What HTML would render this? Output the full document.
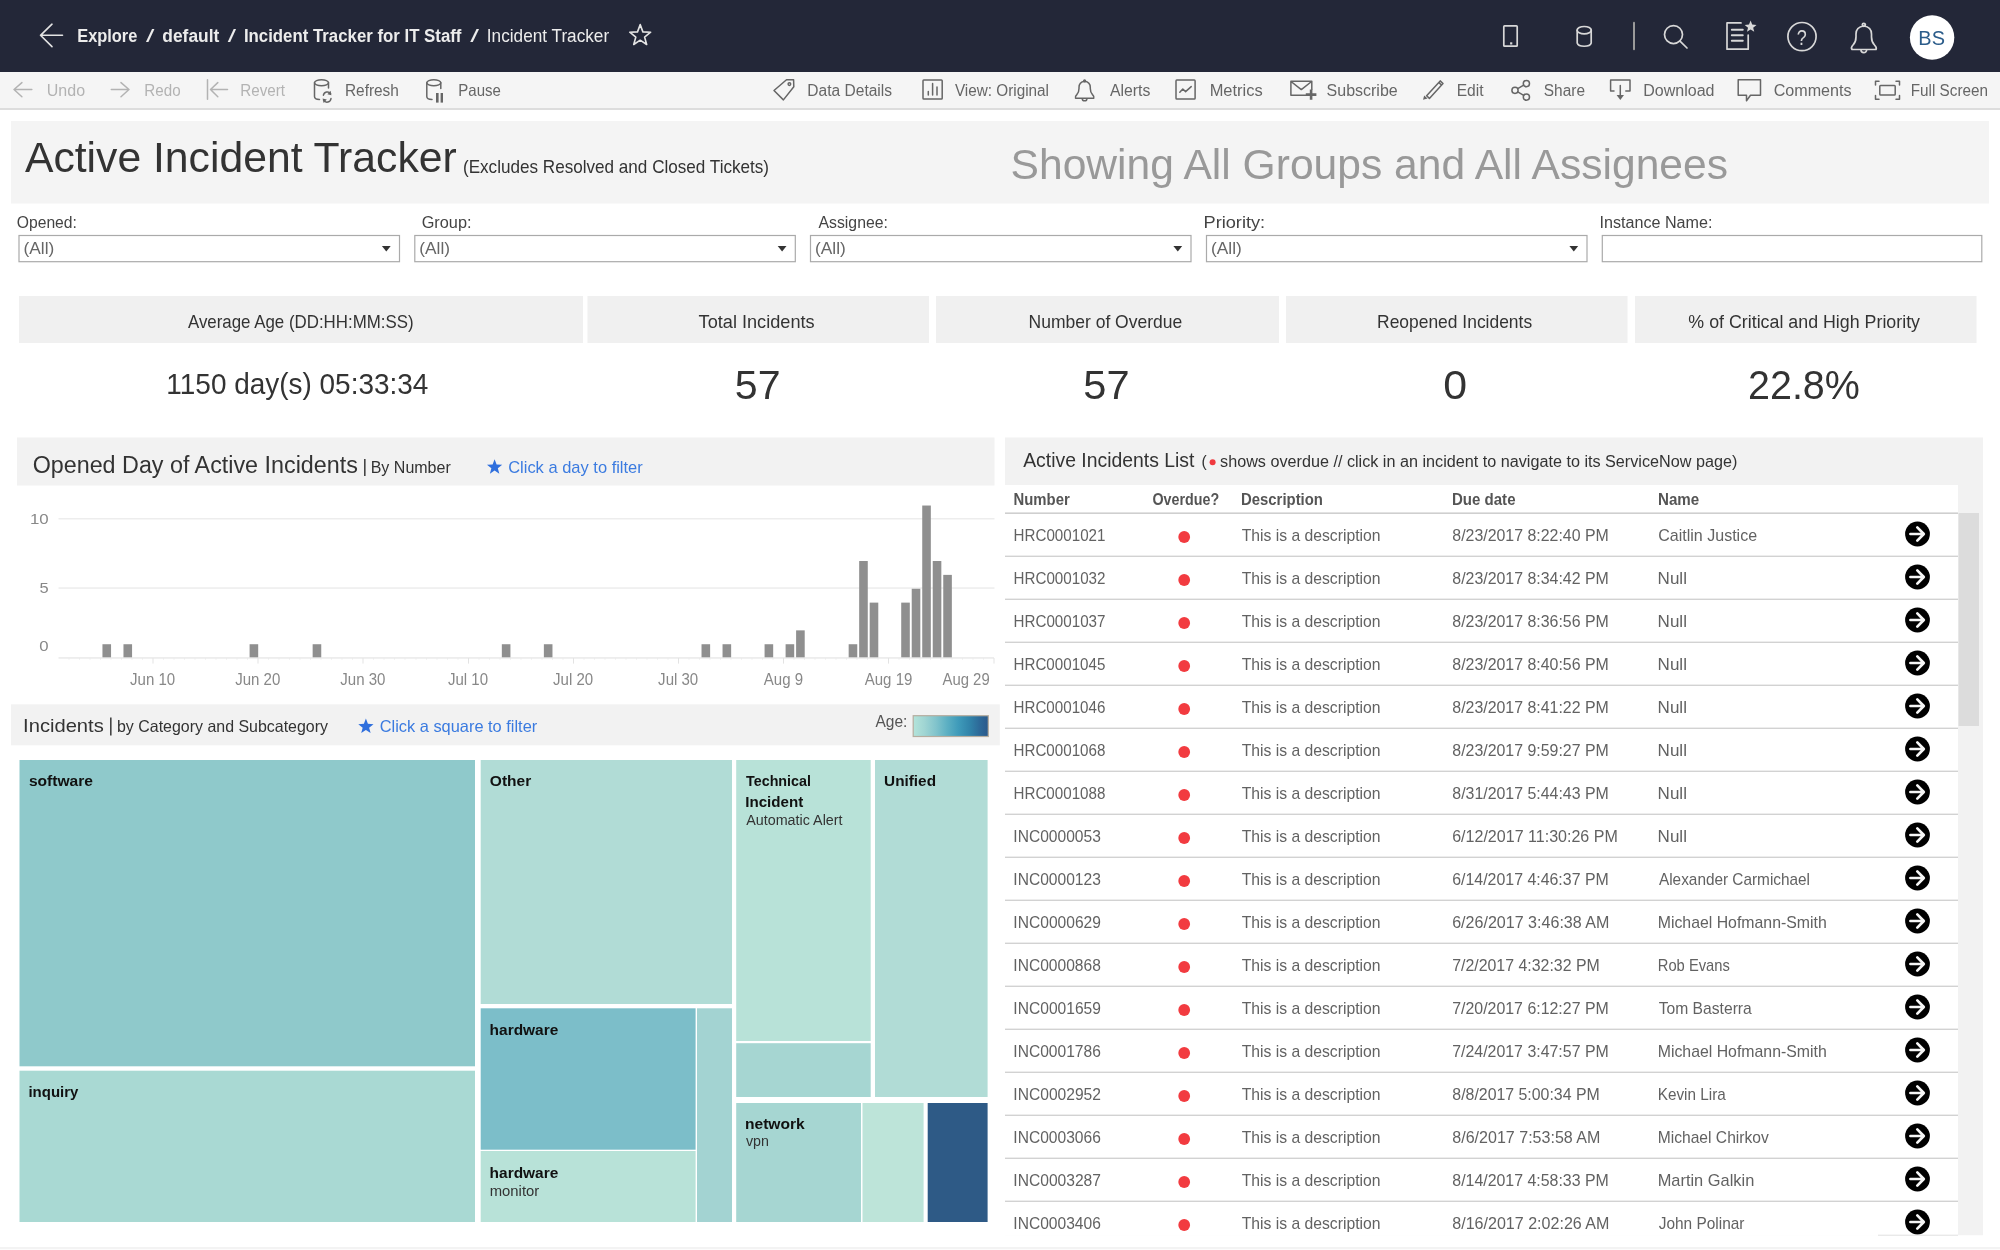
<!DOCTYPE html><html><head><meta charset="utf-8"><style>svg text{font-family:"Liberation Sans",sans-serif}svg{will-change:transform}html,body{margin:0;padding:0;width:2000px;height:1250px;overflow:hidden;background:#fff}</style></head><body><svg width="2000" height="1250" viewBox="0 0 2000 1250" style="position:absolute;left:0;top:0">
<rect x="0" y="0" width="2000.00" height="1250.00" fill="#ffffff"/>
<rect x="0" y="0" width="2000.00" height="72.00" fill="#232738"/>
<g fill="none" stroke="#e4e4e4" stroke-width="1.6" stroke-linecap="round" stroke-linejoin="round">
<path d="M40.5 35.3 H62.5 M52 24.2 L40.5 35.3 L52 46.6"/>
<polygon points="640.20,24.60 642.90,31.88 650.66,32.20 644.57,37.02 646.67,44.50 640.20,40.20 633.73,44.50 635.83,37.02 629.74,32.20 637.50,31.88"/>
</g>
<text x="77.20" y="41.90" font-size="18.46" font-weight="bold" fill="#ececec" textLength="60.16" lengthAdjust="spacingAndGlyphs">Explore</text>
<text x="146.00" y="41.90" font-size="18.46" fill="#ececec" textLength="8.40" lengthAdjust="spacingAndGlyphs">/</text>
<text x="162.29" y="41.90" font-size="18.46" font-weight="bold" fill="#ececec" textLength="57.03" lengthAdjust="spacingAndGlyphs">default</text>
<text x="227.70" y="41.90" font-size="18.46" fill="#ececec" textLength="8.30" lengthAdjust="spacingAndGlyphs">/</text>
<text x="243.88" y="41.90" font-size="18.46" font-weight="bold" fill="#ececec" textLength="217.59" lengthAdjust="spacingAndGlyphs">Incident Tracker for IT Staff</text>
<text x="470.25" y="41.90" font-size="18.46" fill="#ececec" textLength="8.75" lengthAdjust="spacingAndGlyphs">/</text>
<text x="486.81" y="41.90" font-size="18.46" fill="#ececec" textLength="122.37" lengthAdjust="spacingAndGlyphs">Incident Tracker</text>
<g fill="none" stroke="#d8d8d8" stroke-width="1.7" stroke-linecap="round" stroke-linejoin="round">
<rect x="1503.8" y="25.9" width="13.4" height="20.3" rx="0.8"/>
<path d="M1577.2 30.2 V43 A7.1 3.9 0 0 0 1591.2 43 V30.2"/><ellipse cx="1584.2" cy="30.2" rx="7.1" ry="3.7"/>
<path d="M1634 22.8 V49.3" stroke="#9a9a9a" stroke-width="2"/>
<circle cx="1673.5" cy="34.6" r="9"/><path d="M1680 41.2 L1687 48"/>
<path d="M1741 22.9 H1727 V49.2 H1748.2 V35"/><path d="M1731.8 29.8 H1742.8 M1731.8 35.3 H1742.8 M1731.8 40.8 H1742.8" stroke-width="1.9"/>
<circle cx="1802" cy="36.6" r="14.1"/>
<path d="M1865.4 24.8 a1.7 1.7 0 0 1 0 0 M1852 49.5 H1876 Q1877 47.5 1874.5 45 Q1871.5 42 1871.5 37 V34 Q1871.5 27 1863.8 26 Q1856 27 1856 34 V37 Q1856 42 1853 45 Q1850.5 47.5 1852 49.5 Z"/>
<path d="M1861 50 A2.8 2.6 0 0 0 1866.6 50"/><circle cx="1863.8" cy="24.8" r="1.5"/>
</g>
<rect x="1510.1" y="42.3" width="2.2" height="2.2" fill="#d8d8d8"/>
<polygon points="1750.60,20.60 1752.19,24.62 1756.50,24.88 1753.17,27.63 1754.24,31.82 1750.60,29.50 1746.96,31.82 1748.03,27.63 1744.70,24.88 1749.01,24.62" fill="#d8d8d8"/>
<text x="1796.86" y="45.00" font-size="22.09" fill="#d8d8d8" textLength="10.01" lengthAdjust="spacingAndGlyphs">?</text>
<circle cx="1932.1" cy="37.5" r="22.2" fill="#ffffff"/>
<text x="1918.37" y="44.70" font-size="20.35" fill="#2b5c8a" textLength="26.55" lengthAdjust="spacingAndGlyphs">BS</text>
<rect x="0" y="72" width="2000.00" height="36.00" fill="#f5f5f5"/>
<rect x="0" y="108" width="2000.00" height="2.00" fill="#dddddd"/>
<g fill="none" stroke="#b3b3b3" stroke-width="1.5" stroke-linecap="round" stroke-linejoin="round">
<path d="M14 89.5 H31.8 M21.9 82.6 L14 89.5 L21.9 96.7"/>
<path d="M111.3 89.5 H129 M121 82.6 L129 89.5 L121 96.7"/>
<path d="M207.5 79.7 V99.3 M210.5 89.5 H227.5 M217.8 82.6 L210.5 89.5 L217.8 96.7"/>
</g>
<text x="46.76" y="95.80" font-size="17.01" fill="#b3b3b3" textLength="38.31" lengthAdjust="spacingAndGlyphs">Undo</text>
<text x="144.36" y="95.80" font-size="17.01" fill="#b3b3b3" textLength="36.28" lengthAdjust="spacingAndGlyphs">Redo</text>
<text x="240.25" y="95.80" font-size="17.01" fill="#b3b3b3" textLength="44.86" lengthAdjust="spacingAndGlyphs">Revert</text>
<g fill="none" stroke="#666666" stroke-width="1.5" stroke-linecap="round" stroke-linejoin="round">
<ellipse cx="321.5" cy="82.8" rx="7" ry="3"/><path d="M314.5 82.8 V96.6 Q314.5 99.5 319.5 99.6 M328.5 82.8 V88"/>
<path d="M323.4 95.2 A4 4 0 0 1 330.6 93.6 M331 98.5 A4 4 0 0 1 323.6 100.2"/>
<ellipse cx="433.8" cy="82.8" rx="7" ry="3"/><path d="M426.8 82.8 V96.6 Q426.8 99.5 432 99.6 M440.8 82.8 V88.5"/>
</g>
<path d="M330.6 90.8 L331.4 95.2 L327.4 94.2 Z M323.6 103 L322.6 98.6 L326.8 99.6 Z" fill="#666666"/>
<rect x="436" y="93" width="2.60" height="9.60" fill="#666666"/>
<rect x="440.6" y="93" width="2.40" height="9.60" fill="#666666"/>
<text x="344.94" y="95.70" font-size="16.72" fill="#666666" textLength="53.97" lengthAdjust="spacingAndGlyphs">Refresh</text>
<text x="458.27" y="95.70" font-size="16.72" fill="#666666" textLength="42.60" lengthAdjust="spacingAndGlyphs">Pause</text>
<g fill="none" stroke="#666666" stroke-width="1.5" stroke-linecap="round" stroke-linejoin="round">
<path d="M774 90.5 L786.5 79.7 L793.6 79.8 L793.8 86.8 L783.4 99.9 Z"/><circle cx="789.4" cy="84.1" r="1.3"/>
<rect x="923" y="80" width="19.2" height="19" rx="0.8"/><path d="M928.3 91.6 V95 M932.6 83.6 V95 M937 87 V95"/>
<path d="M1075.5 98.3 H1093.8 Q1094.5 96.5 1092.5 94.6 Q1090.3 92.4 1090.3 88.6 V87.4 Q1090.3 82 1084.6 81.2 Q1079 82 1079 87.4 V88.6 Q1079 92.4 1076.8 94.6 Q1074.8 96.5 1075.5 98.3 Z"/><path d="M1082.3 99 A2.3 1.8 0 0 0 1086.9 99"/><circle cx="1084.6" cy="80.9" r="0.9"/>
<rect x="1176" y="80.1" width="19.1" height="19" rx="0.8"/><path d="M1179.8 92.2 L1182.8 89 L1185.6 91.6 L1191.2 86.6"/>
<path d="M1306 95.3 H1290.9 V81.3 H1311.8 V89.5 M1291 81.5 L1301.3 89.6 L1311.6 81.5"/>
</g>
<path d="M1311.1 89.4 V99.8 M1305.8 94.6 H1316.4" stroke="#666666" stroke-width="2.6" fill="none"/>
<text x="807.32" y="95.50" font-size="16.42" fill="#666666" textLength="84.74" lengthAdjust="spacingAndGlyphs">Data Details</text>
<text x="954.93" y="95.50" font-size="16.42" fill="#666666" textLength="94.09" lengthAdjust="spacingAndGlyphs">View: Original</text>
<text x="1109.97" y="95.80" font-size="16.57" fill="#666666" textLength="40.40" lengthAdjust="spacingAndGlyphs">Alerts</text>
<text x="1209.65" y="95.80" font-size="16.57" fill="#666666" textLength="53.05" lengthAdjust="spacingAndGlyphs">Metrics</text>
<text x="1326.57" y="95.80" font-size="16.57" fill="#666666" textLength="71.14" lengthAdjust="spacingAndGlyphs">Subscribe</text>
<g fill="none" stroke="#666666" stroke-width="1.5" stroke-linecap="round" stroke-linejoin="round">
<path d="M1426.6 95.8 L1440.2 80.9 L1443 83.5 L1429.4 98.4 Z M1438.8 82.5 L1441.6 85.1"/>
<circle cx="1526.4" cy="83.6" r="3.1"/><circle cx="1515" cy="90.3" r="3.1"/><circle cx="1526.4" cy="97.1" r="3.1"/><path d="M1517.7 88.7 L1523.7 85.2 M1517.7 91.9 L1523.7 95.4"/>
<path d="M1614 91 H1610.6 V80 H1630 V91 H1625.8 M1620.3 85.5 V96"/>
<path d="M1738.2 79.8 H1760.5 V95.2 H1750.5 L1746.5 100.8 V95.2 H1738.2 Z"/>
<path d="M1875.5 85 V81.2 H1879 M1896 81.2 H1899.5 V85 M1899.5 95.5 V99.2 H1896 M1879 99.2 H1875.5 V95.5"/><rect x="1879.8" y="85.5" width="15.4" height="9.6" rx="0.8"/>
</g>
<path d="M1423 99.8 L1424.2 95.4 L1427.6 98.6 Z" fill="#666666"/>
<path d="M1616.6 95 L1624 95 L1620.3 100 Z" fill="#666666"/>
<text x="1456.72" y="95.60" font-size="16.42" fill="#666666" textLength="26.89" lengthAdjust="spacingAndGlyphs">Edit</text>
<text x="1543.80" y="95.60" font-size="16.42" fill="#666666" textLength="41.19" lengthAdjust="spacingAndGlyphs">Share</text>
<text x="1643.18" y="95.60" font-size="16.42" fill="#666666" textLength="71.35" lengthAdjust="spacingAndGlyphs">Download</text>
<text x="1773.68" y="95.80" font-size="16.42" fill="#666666" textLength="77.90" lengthAdjust="spacingAndGlyphs">Comments</text>
<text x="1910.75" y="95.80" font-size="16.42" fill="#666666" textLength="77.24" lengthAdjust="spacingAndGlyphs">Full Screen</text>
<rect x="11" y="121" width="1978.00" height="82.50" fill="#f4f4f4"/>
<text x="24.92" y="172.30" font-size="42.59" fill="#333333" textLength="431.79" lengthAdjust="spacingAndGlyphs">Active Incident Tracker</text>
<text x="462.94" y="172.50" font-size="18.60" fill="#333333" textLength="306.12" lengthAdjust="spacingAndGlyphs">(Excludes Resolved and Closed Tickets)</text>
<text x="1010.57" y="178.50" font-size="42.88" fill="#999999" textLength="717.47" lengthAdjust="spacingAndGlyphs">Showing All Groups and All Assignees</text>
<text x="16.76" y="228.30" font-size="16.42" fill="#444444" textLength="60.18" lengthAdjust="spacingAndGlyphs">Opened:</text>
<text x="421.68" y="228.30" font-size="16.42" fill="#444444" textLength="49.81" lengthAdjust="spacingAndGlyphs">Group:</text>
<text x="818.47" y="228.30" font-size="16.42" fill="#444444" textLength="69.48" lengthAdjust="spacingAndGlyphs">Assignee:</text>
<text x="1203.51" y="228.30" font-size="16.42" fill="#444444" textLength="61.65" lengthAdjust="spacingAndGlyphs">Priority:</text>
<text x="1599.51" y="228.30" font-size="16.42" fill="#444444" textLength="112.96" lengthAdjust="spacingAndGlyphs">Instance Name:</text>
<rect x="19.0" y="235.5" width="380.5" height="26.2" fill="#ffffff" stroke="#aaaaaa" stroke-width="1.2"/>
<path d="M381.90000000000003 246 L390.7 246 L386.3 251.5 Z" fill="#333333"/>
<text x="23.53" y="254.00" font-size="16.28" fill="#666666" textLength="30.75" lengthAdjust="spacingAndGlyphs">(All)</text>
<rect x="414.8" y="235.5" width="380.5" height="26.2" fill="#ffffff" stroke="#aaaaaa" stroke-width="1.2"/>
<path d="M777.7 246 L786.5 246 L782.1 251.5 Z" fill="#333333"/>
<text x="419.33" y="254.00" font-size="16.28" fill="#666666" textLength="30.75" lengthAdjust="spacingAndGlyphs">(All)</text>
<rect x="810.5" y="235.5" width="380.5" height="26.2" fill="#ffffff" stroke="#aaaaaa" stroke-width="1.2"/>
<path d="M1173.3999999999999 246 L1182.2 246 L1177.8 251.5 Z" fill="#333333"/>
<text x="815.03" y="254.00" font-size="16.28" fill="#666666" textLength="30.75" lengthAdjust="spacingAndGlyphs">(All)</text>
<rect x="1206.5" y="235.5" width="380.5" height="26.2" fill="#ffffff" stroke="#aaaaaa" stroke-width="1.2"/>
<path d="M1569.3999999999999 246 L1578.2 246 L1573.8 251.5 Z" fill="#333333"/>
<text x="1211.03" y="254.00" font-size="16.28" fill="#666666" textLength="30.75" lengthAdjust="spacingAndGlyphs">(All)</text>
<rect x="1602.3" y="235.5" width="379.5" height="26.2" fill="#ffffff" stroke="#aaaaaa" stroke-width="1.2"/>
<rect x="19" y="296" width="564.00" height="47.00" fill="#f0f0f0"/>
<text x="187.97" y="327.50" font-size="17.88" fill="#333333" textLength="225.58" lengthAdjust="spacingAndGlyphs">Average Age (DD:HH:MM:SS)</text>
<text x="166.37" y="394.00" font-size="29.80" fill="#333333" textLength="261.95" lengthAdjust="spacingAndGlyphs">1150 day(s) 05:33:34</text>
<rect x="587.5" y="296" width="341.50" height="47.00" fill="#f0f0f0"/>
<text x="698.59" y="327.50" font-size="17.88" fill="#333333" textLength="116.06" lengthAdjust="spacingAndGlyphs">Total Incidents</text>
<text x="734.85" y="398.50" font-size="41.42" fill="#333333" textLength="45.71" lengthAdjust="spacingAndGlyphs">57</text>
<rect x="936" y="296" width="343.00" height="47.00" fill="#f0f0f0"/>
<text x="1028.56" y="327.50" font-size="17.88" fill="#333333" textLength="153.71" lengthAdjust="spacingAndGlyphs">Number of Overdue</text>
<text x="1083.33" y="398.50" font-size="41.42" fill="#333333" textLength="46.26" lengthAdjust="spacingAndGlyphs">57</text>
<rect x="1286" y="296" width="341.50" height="47.00" fill="#f0f0f0"/>
<text x="1377.07" y="327.50" font-size="17.88" fill="#333333" textLength="155.06" lengthAdjust="spacingAndGlyphs">Reopened Incidents</text>
<text x="1443.32" y="398.50" font-size="41.42" fill="#333333" textLength="23.85" lengthAdjust="spacingAndGlyphs">0</text>
<rect x="1635" y="296" width="341.50" height="47.00" fill="#f0f0f0"/>
<text x="1688.37" y="327.50" font-size="17.88" fill="#333333" textLength="231.67" lengthAdjust="spacingAndGlyphs">% of Critical and High Priority</text>
<text x="1748.02" y="398.50" font-size="41.42" fill="#333333" textLength="111.89" lengthAdjust="spacingAndGlyphs">22.8%</text>
<rect x="17" y="437.5" width="977.50" height="48.00" fill="#f2f2f2"/>
<text x="32.65" y="472.50" font-size="23.98" fill="#333333" textLength="325.20" lengthAdjust="spacingAndGlyphs">Opened Day of Active Incidents</text>
<rect x="364" y="459" width="1.60" height="17.00" fill="#444444"/>
<text x="370.69" y="472.50" font-size="16.57" fill="#333333" textLength="80.08" lengthAdjust="spacingAndGlyphs">By Number</text>
<polygon points="494.60,459.20 496.60,464.45 502.21,464.73 497.83,468.25 499.30,473.67 494.60,470.60 489.90,473.67 491.37,468.25 486.99,464.73 492.60,464.45" fill="#2f6fdd"/>
<text x="508.16" y="472.50" font-size="16.57" fill="#3b7be0" textLength="134.61" lengthAdjust="spacingAndGlyphs">Click a day to filter</text>
<rect x="58.5" y="518" width="936.00" height="1.50" fill="#ededed"/>
<rect x="58.5" y="587.3" width="936.00" height="1.50" fill="#ededed"/>
<rect x="58.5" y="657.3" width="935.50" height="1.30" fill="#e6e6e6"/>
<text x="29.92" y="524.30" font-size="15.12" fill="#888888" textLength="18.74" lengthAdjust="spacingAndGlyphs">10</text>
<text x="39.54" y="593.40" font-size="15.12" fill="#888888" textLength="9.15" lengthAdjust="spacingAndGlyphs">5</text>
<text x="39.35" y="650.50" font-size="15.12" fill="#888888" textLength="9.31" lengthAdjust="spacingAndGlyphs">0</text>
<rect x="68.5" y="658" width="1.00" height="1.60" fill="#ebebeb"/>
<rect x="79.0" y="658" width="1.00" height="1.60" fill="#ebebeb"/>
<rect x="89.5" y="658" width="1.00" height="1.60" fill="#ebebeb"/>
<rect x="100.0" y="658" width="1.00" height="1.60" fill="#ebebeb"/>
<rect x="110.5" y="658" width="1.00" height="1.60" fill="#ebebeb"/>
<rect x="121.0" y="658" width="1.00" height="1.60" fill="#ebebeb"/>
<rect x="131.5" y="658" width="1.00" height="1.60" fill="#ebebeb"/>
<rect x="142.0" y="658" width="1.00" height="1.60" fill="#ebebeb"/>
<rect x="152.5" y="658" width="1.00" height="5.60" fill="#e3e3e3"/>
<rect x="163.0" y="658" width="1.00" height="1.60" fill="#ebebeb"/>
<rect x="173.5" y="658" width="1.00" height="1.60" fill="#ebebeb"/>
<rect x="184.0" y="658" width="1.00" height="1.60" fill="#ebebeb"/>
<rect x="194.5" y="658" width="1.00" height="1.60" fill="#ebebeb"/>
<rect x="205.0" y="658" width="1.00" height="1.60" fill="#ebebeb"/>
<rect x="215.5" y="658" width="1.00" height="1.60" fill="#ebebeb"/>
<rect x="226.0" y="658" width="1.00" height="1.60" fill="#ebebeb"/>
<rect x="236.5" y="658" width="1.00" height="1.60" fill="#ebebeb"/>
<rect x="247.0" y="658" width="1.00" height="1.60" fill="#ebebeb"/>
<rect x="257.5" y="658" width="1.00" height="5.60" fill="#e3e3e3"/>
<rect x="268.0" y="658" width="1.00" height="1.60" fill="#ebebeb"/>
<rect x="278.5" y="658" width="1.00" height="1.60" fill="#ebebeb"/>
<rect x="289.0" y="658" width="1.00" height="1.60" fill="#ebebeb"/>
<rect x="299.5" y="658" width="1.00" height="1.60" fill="#ebebeb"/>
<rect x="310.0" y="658" width="1.00" height="1.60" fill="#ebebeb"/>
<rect x="320.5" y="658" width="1.00" height="1.60" fill="#ebebeb"/>
<rect x="331.0" y="658" width="1.00" height="1.60" fill="#ebebeb"/>
<rect x="341.5" y="658" width="1.00" height="1.60" fill="#ebebeb"/>
<rect x="352.0" y="658" width="1.00" height="1.60" fill="#ebebeb"/>
<rect x="362.5" y="658" width="1.00" height="5.60" fill="#e3e3e3"/>
<rect x="373.0" y="658" width="1.00" height="1.60" fill="#ebebeb"/>
<rect x="383.5" y="658" width="1.00" height="1.60" fill="#ebebeb"/>
<rect x="394.0" y="658" width="1.00" height="1.60" fill="#ebebeb"/>
<rect x="404.5" y="658" width="1.00" height="1.60" fill="#ebebeb"/>
<rect x="415.5" y="658" width="1.00" height="1.60" fill="#ebebeb"/>
<rect x="426.0" y="658" width="1.00" height="1.60" fill="#ebebeb"/>
<rect x="436.5" y="658" width="1.00" height="1.60" fill="#ebebeb"/>
<rect x="447.0" y="658" width="1.00" height="1.60" fill="#ebebeb"/>
<rect x="457.5" y="658" width="1.00" height="1.60" fill="#ebebeb"/>
<rect x="468.0" y="658" width="1.00" height="5.60" fill="#e3e3e3"/>
<rect x="478.5" y="658" width="1.00" height="1.60" fill="#ebebeb"/>
<rect x="489.0" y="658" width="1.00" height="1.60" fill="#ebebeb"/>
<rect x="499.5" y="658" width="1.00" height="1.60" fill="#ebebeb"/>
<rect x="510.0" y="658" width="1.00" height="1.60" fill="#ebebeb"/>
<rect x="520.5" y="658" width="1.00" height="1.60" fill="#ebebeb"/>
<rect x="531.0" y="658" width="1.00" height="1.60" fill="#ebebeb"/>
<rect x="541.5" y="658" width="1.00" height="1.60" fill="#ebebeb"/>
<rect x="552.0" y="658" width="1.00" height="1.60" fill="#ebebeb"/>
<rect x="562.5" y="658" width="1.00" height="1.60" fill="#ebebeb"/>
<rect x="573.0" y="658" width="1.00" height="5.60" fill="#e3e3e3"/>
<rect x="583.5" y="658" width="1.00" height="1.60" fill="#ebebeb"/>
<rect x="594.0" y="658" width="1.00" height="1.60" fill="#ebebeb"/>
<rect x="604.5" y="658" width="1.00" height="1.60" fill="#ebebeb"/>
<rect x="615.0" y="658" width="1.00" height="1.60" fill="#ebebeb"/>
<rect x="625.5" y="658" width="1.00" height="1.60" fill="#ebebeb"/>
<rect x="636.0" y="658" width="1.00" height="1.60" fill="#ebebeb"/>
<rect x="646.5" y="658" width="1.00" height="1.60" fill="#ebebeb"/>
<rect x="657.0" y="658" width="1.00" height="1.60" fill="#ebebeb"/>
<rect x="667.5" y="658" width="1.00" height="1.60" fill="#ebebeb"/>
<rect x="678.0" y="658" width="1.00" height="5.60" fill="#e3e3e3"/>
<rect x="688.5" y="658" width="1.00" height="1.60" fill="#ebebeb"/>
<rect x="699.0" y="658" width="1.00" height="1.60" fill="#ebebeb"/>
<rect x="709.5" y="658" width="1.00" height="1.60" fill="#ebebeb"/>
<rect x="720.0" y="658" width="1.00" height="1.60" fill="#ebebeb"/>
<rect x="730.5" y="658" width="1.00" height="1.60" fill="#ebebeb"/>
<rect x="741.0" y="658" width="1.00" height="1.60" fill="#ebebeb"/>
<rect x="751.5" y="658" width="1.00" height="1.60" fill="#ebebeb"/>
<rect x="762.0" y="658" width="1.00" height="1.60" fill="#ebebeb"/>
<rect x="772.5" y="658" width="1.00" height="1.60" fill="#ebebeb"/>
<rect x="783.0" y="658" width="1.00" height="5.60" fill="#e3e3e3"/>
<rect x="793.5" y="658" width="1.00" height="1.60" fill="#ebebeb"/>
<rect x="804.0" y="658" width="1.00" height="1.60" fill="#ebebeb"/>
<rect x="814.5" y="658" width="1.00" height="1.60" fill="#ebebeb"/>
<rect x="825.0" y="658" width="1.00" height="1.60" fill="#ebebeb"/>
<rect x="835.5" y="658" width="1.00" height="1.60" fill="#ebebeb"/>
<rect x="846.0" y="658" width="1.00" height="1.60" fill="#ebebeb"/>
<rect x="856.5" y="658" width="1.00" height="1.60" fill="#ebebeb"/>
<rect x="867.0" y="658" width="1.00" height="1.60" fill="#ebebeb"/>
<rect x="877.5" y="658" width="1.00" height="1.60" fill="#ebebeb"/>
<rect x="888.0" y="658" width="1.00" height="5.60" fill="#e3e3e3"/>
<rect x="898.5" y="658" width="1.00" height="1.60" fill="#ebebeb"/>
<rect x="909.0" y="658" width="1.00" height="1.60" fill="#ebebeb"/>
<rect x="919.5" y="658" width="1.00" height="1.60" fill="#ebebeb"/>
<rect x="930.0" y="658" width="1.00" height="1.60" fill="#ebebeb"/>
<rect x="940.5" y="658" width="1.00" height="1.60" fill="#ebebeb"/>
<rect x="951.5" y="658" width="1.00" height="1.60" fill="#ebebeb"/>
<rect x="962.0" y="658" width="1.00" height="1.60" fill="#ebebeb"/>
<rect x="972.5" y="658" width="1.00" height="1.60" fill="#ebebeb"/>
<rect x="983.0" y="658" width="1.00" height="1.60" fill="#ebebeb"/>
<rect x="993.5" y="658" width="1.00" height="5.60" fill="#e3e3e3"/>
<rect x="102.45" y="644.2299999999999" width="8.60" height="13.07" fill="#8f8f8f"/>
<rect x="123.47" y="644.2299999999999" width="8.60" height="13.07" fill="#8f8f8f"/>
<rect x="249.59" y="644.2299999999999" width="8.60" height="13.07" fill="#8f8f8f"/>
<rect x="312.65" y="644.2299999999999" width="8.60" height="13.07" fill="#8f8f8f"/>
<rect x="501.83" y="644.2299999999999" width="8.60" height="13.07" fill="#8f8f8f"/>
<rect x="543.87" y="644.2299999999999" width="8.60" height="13.07" fill="#8f8f8f"/>
<rect x="701.52" y="644.2299999999999" width="8.60" height="13.07" fill="#8f8f8f"/>
<rect x="722.54" y="644.2299999999999" width="8.60" height="13.07" fill="#8f8f8f"/>
<rect x="764.58" y="644.2299999999999" width="8.60" height="13.07" fill="#8f8f8f"/>
<rect x="785.6" y="644.2299999999999" width="8.60" height="13.07" fill="#8f8f8f"/>
<rect x="796.11" y="630.3599999999999" width="8.60" height="26.94" fill="#8f8f8f"/>
<rect x="848.66" y="644.2299999999999" width="8.60" height="13.07" fill="#8f8f8f"/>
<rect x="859.17" y="561.0099999999999" width="8.60" height="96.29" fill="#8f8f8f"/>
<rect x="869.68" y="602.6199999999999" width="8.60" height="54.68" fill="#8f8f8f"/>
<rect x="901.21" y="602.6199999999999" width="8.60" height="54.68" fill="#8f8f8f"/>
<rect x="911.72" y="588.7499999999999" width="8.60" height="68.55" fill="#8f8f8f"/>
<rect x="922.23" y="505.53" width="8.60" height="151.77" fill="#8f8f8f"/>
<rect x="932.74" y="561.0099999999999" width="8.60" height="96.29" fill="#8f8f8f"/>
<rect x="943.25" y="574.8799999999999" width="8.60" height="82.42" fill="#8f8f8f"/>
<text x="130.11" y="685.00" font-size="15.99" fill="#888888" textLength="45.12" lengthAdjust="spacingAndGlyphs">Jun 10</text>
<text x="235.21" y="685.00" font-size="15.99" fill="#888888" textLength="45.12" lengthAdjust="spacingAndGlyphs">Jun 20</text>
<text x="340.31" y="685.00" font-size="15.99" fill="#888888" textLength="45.12" lengthAdjust="spacingAndGlyphs">Jun 30</text>
<text x="447.92" y="685.00" font-size="15.99" fill="#888888" textLength="40.11" lengthAdjust="spacingAndGlyphs">Jul 10</text>
<text x="553.02" y="685.00" font-size="15.99" fill="#888888" textLength="40.11" lengthAdjust="spacingAndGlyphs">Jul 20</text>
<text x="658.12" y="685.00" font-size="15.99" fill="#888888" textLength="40.11" lengthAdjust="spacingAndGlyphs">Jul 30</text>
<text x="763.80" y="685.00" font-size="15.99" fill="#888888" textLength="39.28" lengthAdjust="spacingAndGlyphs">Aug 9</text>
<text x="864.72" y="685.00" font-size="15.99" fill="#888888" textLength="47.64" lengthAdjust="spacingAndGlyphs">Aug 19</text>
<text x="942.47" y="685.00" font-size="15.99" fill="#888888" textLength="47.23" lengthAdjust="spacingAndGlyphs">Aug 29</text>
<rect x="11" y="704.3" width="988.80" height="41.00" fill="#f2f2f2"/>
<text x="23.14" y="732.00" font-size="18.17" fill="#333333" textLength="80.59" lengthAdjust="spacingAndGlyphs">Incidents</text>
<rect x="110" y="717.5" width="1.60" height="18.00" fill="#444444"/>
<text x="116.97" y="732.00" font-size="16.72" fill="#333333" textLength="211.06" lengthAdjust="spacingAndGlyphs">by Category and Subcategory</text>
<polygon points="365.90,718.60 367.90,723.85 373.51,724.13 369.13,727.65 370.60,733.07 365.90,730.00 361.20,733.07 362.67,727.65 358.29,724.13 363.90,723.85" fill="#2f6fdd"/>
<text x="379.67" y="732.00" font-size="16.72" fill="#3b7be0" textLength="157.60" lengthAdjust="spacingAndGlyphs">Click a square to filter</text>
<text x="875.47" y="726.80" font-size="17.01" fill="#555555" textLength="31.95" lengthAdjust="spacingAndGlyphs">Age:</text>
<defs><linearGradient id="ag" x1="0" x2="1" y1="0" y2="0"><stop offset="0" stop-color="#b4e4da"/><stop offset="0.15" stop-color="#a0d5d3"/><stop offset="0.3" stop-color="#82c4cc"/><stop offset="0.45" stop-color="#5db0c3"/><stop offset="0.6" stop-color="#3f9bba"/><stop offset="0.75" stop-color="#3184aa"/><stop offset="0.88" stop-color="#2d6a99"/><stop offset="1" stop-color="#2a588b"/></linearGradient></defs>
<rect x="913.2" y="715.7" width="75.1" height="20.8" fill="url(#ag)" stroke="#b5ad9f" stroke-width="1.2"/>
<rect x="19.5" y="760" width="455.50" height="306.30" fill="#8fc9cb"/>
<rect x="19.5" y="1070.7" width="455.50" height="151.30" fill="#a9d9d3"/>
<rect x="480.7" y="760" width="251.30" height="244.00" fill="#b1dcd6"/>
<rect x="480.7" y="1008.3" width="214.90" height="141.40" fill="#7cbec9"/>
<rect x="480.7" y="1151" width="214.90" height="71.00" fill="#b8e2d8"/>
<rect x="697" y="1008.3" width="35.00" height="213.70" fill="#a3d3d2"/>
<rect x="736.2" y="760" width="134.50" height="281.00" fill="#b8e2d8"/>
<rect x="736.2" y="1043.2" width="134.50" height="53.80" fill="#a6d6d2"/>
<rect x="875" y="760" width="112.60" height="337.00" fill="#b1dcd6"/>
<rect x="736.2" y="1103" width="124.80" height="119.00" fill="#a6d6d2"/>
<rect x="862.5" y="1103" width="61.10" height="119.00" fill="#bde4d9"/>
<rect x="927.7" y="1103" width="59.90" height="119.00" fill="#2e5a86"/>
<text x="28.95" y="786.20" font-size="14.83" font-weight="bold" fill="#111111" textLength="64.08" lengthAdjust="spacingAndGlyphs">software</text>
<text x="489.86" y="786.20" font-size="14.83" font-weight="bold" fill="#111111" textLength="41.37" lengthAdjust="spacingAndGlyphs">Other</text>
<text x="746.04" y="786.20" font-size="14.83" font-weight="bold" fill="#111111" textLength="64.97" lengthAdjust="spacingAndGlyphs">Technical</text>
<text x="745.19" y="807.00" font-size="14.83" font-weight="bold" fill="#111111" textLength="58.00" lengthAdjust="spacingAndGlyphs">Incident</text>
<text x="746.17" y="825.00" font-size="14.24" fill="#333333" textLength="96.43" lengthAdjust="spacingAndGlyphs">Automatic Alert</text>
<text x="884.08" y="786.20" font-size="14.83" font-weight="bold" fill="#111111" textLength="51.93" lengthAdjust="spacingAndGlyphs">Unified</text>
<text x="28.45" y="1097.30" font-size="14.83" font-weight="bold" fill="#111111" textLength="49.93" lengthAdjust="spacingAndGlyphs">inquiry</text>
<text x="489.62" y="1035.00" font-size="14.83" font-weight="bold" fill="#111111" textLength="68.71" lengthAdjust="spacingAndGlyphs">hardware</text>
<text x="489.62" y="1178.00" font-size="14.83" font-weight="bold" fill="#111111" textLength="68.71" lengthAdjust="spacingAndGlyphs">hardware</text>
<text x="489.71" y="1196.00" font-size="14.24" fill="#333333" textLength="49.53" lengthAdjust="spacingAndGlyphs">monitor</text>
<text x="744.97" y="1129.30" font-size="14.83" font-weight="bold" fill="#111111" textLength="59.81" lengthAdjust="spacingAndGlyphs">network</text>
<text x="745.95" y="1146.40" font-size="14.24" fill="#333333" textLength="22.97" lengthAdjust="spacingAndGlyphs">vpn</text>
<rect x="0" y="1247" width="2000.00" height="2.30" fill="#f3f3f3"/>
<rect x="1005" y="437.5" width="978.00" height="798.00" fill="#f2f2f2"/>
<rect x="1005" y="485" width="953.00" height="750.50" fill="#ffffff"/>
<text x="1023.21" y="467.00" font-size="19.33" fill="#333333" textLength="171.18" lengthAdjust="spacingAndGlyphs">Active Incidents List</text>
<text x="1201.53" y="467.00" font-size="16.50" fill="#333333" textLength="5.22" lengthAdjust="spacingAndGlyphs">(</text>
<circle cx="1212.6" cy="462.2" r="3" fill="#f03a3f"/>
<text x="1220.05" y="467.00" font-size="16.42" fill="#333333" textLength="517.25" lengthAdjust="spacingAndGlyphs">shows overdue // click in an incident to navigate to its ServiceNow page)</text>
<text x="1013.50" y="504.50" font-size="15.70" font-weight="bold" fill="#555555" textLength="56.22" lengthAdjust="spacingAndGlyphs">Number</text>
<text x="1152.41" y="504.50" font-size="15.70" font-weight="bold" fill="#555555" textLength="66.71" lengthAdjust="spacingAndGlyphs">Overdue?</text>
<text x="1241.00" y="504.50" font-size="15.70" font-weight="bold" fill="#555555" textLength="81.92" lengthAdjust="spacingAndGlyphs">Description</text>
<text x="1451.99" y="504.50" font-size="15.70" font-weight="bold" fill="#555555" textLength="63.52" lengthAdjust="spacingAndGlyphs">Due date</text>
<text x="1657.99" y="504.50" font-size="15.70" font-weight="bold" fill="#555555" textLength="41.23" lengthAdjust="spacingAndGlyphs">Name</text>
<rect x="1005" y="512.4" width="953.00" height="1.60" fill="#cfcfcf"/>
<text x="1013.56" y="540.50" font-size="15.99" fill="#626262" textLength="91.88" lengthAdjust="spacingAndGlyphs">HRC0001021</text>
<circle cx="1184.2" cy="537" r="5.9" fill="#f23b40"/>
<text x="1241.65" y="540.50" font-size="15.99" fill="#626262" textLength="138.87" lengthAdjust="spacingAndGlyphs">This is a description</text>
<text x="1452.31" y="540.50" font-size="15.99" fill="#626262" textLength="156.50" lengthAdjust="spacingAndGlyphs">8/23/2017 8:22:40 PM</text>
<text x="1658.19" y="540.50" font-size="15.99" fill="#626262" textLength="98.93" lengthAdjust="spacingAndGlyphs">Caitlin Justice</text>
<circle cx="1917.5" cy="534" r="12.4" fill="#000000"/>
<path d="M1910.4 534 H1922.5 M1917.3 527.4 L1923.8 534 L1917.3 540.6" fill="none" stroke="#f6f6f6" stroke-width="2.7" stroke-linecap="round" stroke-linejoin="round"/>
<rect x="1005" y="555.6" width="953.00" height="1.40" fill="#d2d2d2"/>
<text x="1013.56" y="583.50" font-size="15.99" fill="#626262" textLength="91.91" lengthAdjust="spacingAndGlyphs">HRC0001032</text>
<circle cx="1184.2" cy="580" r="5.9" fill="#f23b40"/>
<text x="1241.65" y="583.50" font-size="15.99" fill="#626262" textLength="138.87" lengthAdjust="spacingAndGlyphs">This is a description</text>
<text x="1452.31" y="583.50" font-size="15.99" fill="#626262" textLength="156.50" lengthAdjust="spacingAndGlyphs">8/23/2017 8:34:42 PM</text>
<text x="1657.60" y="583.50" font-size="15.99" fill="#626262" textLength="29.34" lengthAdjust="spacingAndGlyphs">Null</text>
<circle cx="1917.5" cy="577" r="12.4" fill="#000000"/>
<path d="M1910.4 577 H1922.5 M1917.3 570.4 L1923.8 577 L1917.3 583.6" fill="none" stroke="#f6f6f6" stroke-width="2.7" stroke-linecap="round" stroke-linejoin="round"/>
<rect x="1005" y="598.6" width="953.00" height="1.40" fill="#d2d2d2"/>
<text x="1013.56" y="626.50" font-size="15.99" fill="#626262" textLength="91.91" lengthAdjust="spacingAndGlyphs">HRC0001037</text>
<circle cx="1184.2" cy="623" r="5.9" fill="#f23b40"/>
<text x="1241.65" y="626.50" font-size="15.99" fill="#626262" textLength="138.87" lengthAdjust="spacingAndGlyphs">This is a description</text>
<text x="1452.31" y="626.50" font-size="15.99" fill="#626262" textLength="156.50" lengthAdjust="spacingAndGlyphs">8/23/2017 8:36:56 PM</text>
<text x="1657.60" y="626.50" font-size="15.99" fill="#626262" textLength="29.34" lengthAdjust="spacingAndGlyphs">Null</text>
<circle cx="1917.5" cy="620" r="12.4" fill="#000000"/>
<path d="M1910.4 620 H1922.5 M1917.3 613.4 L1923.8 620 L1917.3 626.6" fill="none" stroke="#f6f6f6" stroke-width="2.7" stroke-linecap="round" stroke-linejoin="round"/>
<rect x="1005" y="641.6" width="953.00" height="1.40" fill="#d2d2d2"/>
<text x="1013.56" y="669.50" font-size="15.99" fill="#626262" textLength="91.78" lengthAdjust="spacingAndGlyphs">HRC0001045</text>
<circle cx="1184.2" cy="666" r="5.9" fill="#f23b40"/>
<text x="1241.65" y="669.50" font-size="15.99" fill="#626262" textLength="138.87" lengthAdjust="spacingAndGlyphs">This is a description</text>
<text x="1452.31" y="669.50" font-size="15.99" fill="#626262" textLength="156.50" lengthAdjust="spacingAndGlyphs">8/23/2017 8:40:56 PM</text>
<text x="1657.60" y="669.50" font-size="15.99" fill="#626262" textLength="29.34" lengthAdjust="spacingAndGlyphs">Null</text>
<circle cx="1917.5" cy="663" r="12.4" fill="#000000"/>
<path d="M1910.4 663 H1922.5 M1917.3 656.4 L1923.8 663 L1917.3 669.6" fill="none" stroke="#f6f6f6" stroke-width="2.7" stroke-linecap="round" stroke-linejoin="round"/>
<rect x="1005" y="684.6" width="953.00" height="1.40" fill="#d2d2d2"/>
<text x="1013.56" y="712.50" font-size="15.99" fill="#626262" textLength="91.81" lengthAdjust="spacingAndGlyphs">HRC0001046</text>
<circle cx="1184.2" cy="709" r="5.9" fill="#f23b40"/>
<text x="1241.65" y="712.50" font-size="15.99" fill="#626262" textLength="138.87" lengthAdjust="spacingAndGlyphs">This is a description</text>
<text x="1452.31" y="712.50" font-size="15.99" fill="#626262" textLength="156.50" lengthAdjust="spacingAndGlyphs">8/23/2017 8:41:22 PM</text>
<text x="1657.60" y="712.50" font-size="15.99" fill="#626262" textLength="29.34" lengthAdjust="spacingAndGlyphs">Null</text>
<circle cx="1917.5" cy="706" r="12.4" fill="#000000"/>
<path d="M1910.4 706 H1922.5 M1917.3 699.4 L1923.8 706 L1917.3 712.6" fill="none" stroke="#f6f6f6" stroke-width="2.7" stroke-linecap="round" stroke-linejoin="round"/>
<rect x="1005" y="727.6" width="953.00" height="1.40" fill="#d2d2d2"/>
<text x="1013.56" y="755.50" font-size="15.99" fill="#626262" textLength="91.80" lengthAdjust="spacingAndGlyphs">HRC0001068</text>
<circle cx="1184.2" cy="752" r="5.9" fill="#f23b40"/>
<text x="1241.65" y="755.50" font-size="15.99" fill="#626262" textLength="138.87" lengthAdjust="spacingAndGlyphs">This is a description</text>
<text x="1452.31" y="755.50" font-size="15.99" fill="#626262" textLength="156.50" lengthAdjust="spacingAndGlyphs">8/23/2017 9:59:27 PM</text>
<text x="1657.60" y="755.50" font-size="15.99" fill="#626262" textLength="29.34" lengthAdjust="spacingAndGlyphs">Null</text>
<circle cx="1917.5" cy="749" r="12.4" fill="#000000"/>
<path d="M1910.4 749 H1922.5 M1917.3 742.4 L1923.8 749 L1917.3 755.6" fill="none" stroke="#f6f6f6" stroke-width="2.7" stroke-linecap="round" stroke-linejoin="round"/>
<rect x="1005" y="770.6" width="953.00" height="1.40" fill="#d2d2d2"/>
<text x="1013.56" y="798.50" font-size="15.99" fill="#626262" textLength="91.80" lengthAdjust="spacingAndGlyphs">HRC0001088</text>
<circle cx="1184.2" cy="795" r="5.9" fill="#f23b40"/>
<text x="1241.65" y="798.50" font-size="15.99" fill="#626262" textLength="138.87" lengthAdjust="spacingAndGlyphs">This is a description</text>
<text x="1452.31" y="798.50" font-size="15.99" fill="#626262" textLength="156.50" lengthAdjust="spacingAndGlyphs">8/31/2017 5:44:43 PM</text>
<text x="1657.60" y="798.50" font-size="15.99" fill="#626262" textLength="29.34" lengthAdjust="spacingAndGlyphs">Null</text>
<circle cx="1917.5" cy="792" r="12.4" fill="#000000"/>
<path d="M1910.4 792 H1922.5 M1917.3 785.4 L1923.8 792 L1917.3 798.6" fill="none" stroke="#f6f6f6" stroke-width="2.7" stroke-linecap="round" stroke-linejoin="round"/>
<rect x="1005" y="813.6" width="953.00" height="1.40" fill="#d2d2d2"/>
<text x="1013.36" y="841.50" font-size="15.99" fill="#626262" textLength="87.52" lengthAdjust="spacingAndGlyphs">INC0000053</text>
<circle cx="1184.2" cy="838" r="5.9" fill="#f23b40"/>
<text x="1241.65" y="841.50" font-size="15.99" fill="#626262" textLength="138.87" lengthAdjust="spacingAndGlyphs">This is a description</text>
<text x="1452.19" y="841.50" font-size="15.99" fill="#626262" textLength="165.63" lengthAdjust="spacingAndGlyphs">6/12/2017 11:30:26 PM</text>
<text x="1657.60" y="841.50" font-size="15.99" fill="#626262" textLength="29.34" lengthAdjust="spacingAndGlyphs">Null</text>
<circle cx="1917.5" cy="835" r="12.4" fill="#000000"/>
<path d="M1910.4 835 H1922.5 M1917.3 828.4 L1923.8 835 L1917.3 841.6" fill="none" stroke="#f6f6f6" stroke-width="2.7" stroke-linecap="round" stroke-linejoin="round"/>
<rect x="1005" y="856.6" width="953.00" height="1.40" fill="#d2d2d2"/>
<text x="1013.36" y="884.50" font-size="15.99" fill="#626262" textLength="87.52" lengthAdjust="spacingAndGlyphs">INC0000123</text>
<circle cx="1184.2" cy="881" r="5.9" fill="#f23b40"/>
<text x="1241.65" y="884.50" font-size="15.99" fill="#626262" textLength="138.87" lengthAdjust="spacingAndGlyphs">This is a description</text>
<text x="1452.19" y="884.50" font-size="15.99" fill="#626262" textLength="156.61" lengthAdjust="spacingAndGlyphs">6/14/2017 4:46:37 PM</text>
<text x="1658.97" y="884.50" font-size="15.99" fill="#626262" textLength="151.06" lengthAdjust="spacingAndGlyphs">Alexander Carmichael</text>
<circle cx="1917.5" cy="878" r="12.4" fill="#000000"/>
<path d="M1910.4 878 H1922.5 M1917.3 871.4 L1923.8 878 L1917.3 884.6" fill="none" stroke="#f6f6f6" stroke-width="2.7" stroke-linecap="round" stroke-linejoin="round"/>
<rect x="1005" y="899.6" width="953.00" height="1.40" fill="#d2d2d2"/>
<text x="1013.36" y="927.50" font-size="15.99" fill="#626262" textLength="87.58" lengthAdjust="spacingAndGlyphs">INC0000629</text>
<circle cx="1184.2" cy="924" r="5.9" fill="#f23b40"/>
<text x="1241.65" y="927.50" font-size="15.99" fill="#626262" textLength="138.87" lengthAdjust="spacingAndGlyphs">This is a description</text>
<text x="1452.18" y="927.50" font-size="15.99" fill="#626262" textLength="157.23" lengthAdjust="spacingAndGlyphs">6/26/2017 3:46:38 AM</text>
<text x="1657.70" y="927.50" font-size="15.99" fill="#626262" textLength="169.03" lengthAdjust="spacingAndGlyphs">Michael Hofmann-Smith</text>
<circle cx="1917.5" cy="921" r="12.4" fill="#000000"/>
<path d="M1910.4 921 H1922.5 M1917.3 914.4 L1923.8 921 L1917.3 927.6" fill="none" stroke="#f6f6f6" stroke-width="2.7" stroke-linecap="round" stroke-linejoin="round"/>
<rect x="1005" y="942.6" width="953.00" height="1.40" fill="#d2d2d2"/>
<text x="1013.36" y="970.50" font-size="15.99" fill="#626262" textLength="87.52" lengthAdjust="spacingAndGlyphs">INC0000868</text>
<circle cx="1184.2" cy="967" r="5.9" fill="#f23b40"/>
<text x="1241.65" y="970.50" font-size="15.99" fill="#626262" textLength="138.87" lengthAdjust="spacingAndGlyphs">This is a description</text>
<text x="1452.18" y="970.50" font-size="15.99" fill="#626262" textLength="147.62" lengthAdjust="spacingAndGlyphs">7/2/2017 4:32:32 PM</text>
<text x="1657.79" y="970.50" font-size="15.99" fill="#626262" textLength="72.04" lengthAdjust="spacingAndGlyphs">Rob Evans</text>
<circle cx="1917.5" cy="964" r="12.4" fill="#000000"/>
<path d="M1910.4 964 H1922.5 M1917.3 957.4 L1923.8 964 L1917.3 970.6" fill="none" stroke="#f6f6f6" stroke-width="2.7" stroke-linecap="round" stroke-linejoin="round"/>
<rect x="1005" y="985.6" width="953.00" height="1.40" fill="#d2d2d2"/>
<text x="1013.36" y="1013.50" font-size="15.99" fill="#626262" textLength="87.58" lengthAdjust="spacingAndGlyphs">INC0001659</text>
<circle cx="1184.2" cy="1010" r="5.9" fill="#f23b40"/>
<text x="1241.65" y="1013.50" font-size="15.99" fill="#626262" textLength="138.87" lengthAdjust="spacingAndGlyphs">This is a description</text>
<text x="1452.18" y="1013.50" font-size="15.99" fill="#626262" textLength="156.62" lengthAdjust="spacingAndGlyphs">7/20/2017 6:12:27 PM</text>
<text x="1658.65" y="1013.50" font-size="15.99" fill="#626262" textLength="93.15" lengthAdjust="spacingAndGlyphs">Tom Basterra</text>
<circle cx="1917.5" cy="1007" r="12.4" fill="#000000"/>
<path d="M1910.4 1007 H1922.5 M1917.3 1000.4 L1923.8 1007 L1917.3 1013.6" fill="none" stroke="#f6f6f6" stroke-width="2.7" stroke-linecap="round" stroke-linejoin="round"/>
<rect x="1005" y="1028.6" width="953.00" height="1.40" fill="#d2d2d2"/>
<text x="1013.36" y="1056.50" font-size="15.99" fill="#626262" textLength="87.52" lengthAdjust="spacingAndGlyphs">INC0001786</text>
<circle cx="1184.2" cy="1053" r="5.9" fill="#f23b40"/>
<text x="1241.65" y="1056.50" font-size="15.99" fill="#626262" textLength="138.87" lengthAdjust="spacingAndGlyphs">This is a description</text>
<text x="1452.18" y="1056.50" font-size="15.99" fill="#626262" textLength="156.62" lengthAdjust="spacingAndGlyphs">7/24/2017 3:47:57 PM</text>
<text x="1657.70" y="1056.50" font-size="15.99" fill="#626262" textLength="169.03" lengthAdjust="spacingAndGlyphs">Michael Hofmann-Smith</text>
<circle cx="1917.5" cy="1050" r="12.4" fill="#000000"/>
<path d="M1910.4 1050 H1922.5 M1917.3 1043.4 L1923.8 1050 L1917.3 1056.6" fill="none" stroke="#f6f6f6" stroke-width="2.7" stroke-linecap="round" stroke-linejoin="round"/>
<rect x="1005" y="1071.6" width="953.00" height="1.40" fill="#d2d2d2"/>
<text x="1013.36" y="1099.50" font-size="15.99" fill="#626262" textLength="87.62" lengthAdjust="spacingAndGlyphs">INC0002952</text>
<circle cx="1184.2" cy="1096" r="5.9" fill="#f23b40"/>
<text x="1241.65" y="1099.50" font-size="15.99" fill="#626262" textLength="138.87" lengthAdjust="spacingAndGlyphs">This is a description</text>
<text x="1452.31" y="1099.50" font-size="15.99" fill="#626262" textLength="147.49" lengthAdjust="spacingAndGlyphs">8/8/2017 5:00:34 PM</text>
<text x="1657.75" y="1099.50" font-size="15.99" fill="#626262" textLength="68.00" lengthAdjust="spacingAndGlyphs">Kevin Lira</text>
<circle cx="1917.5" cy="1093" r="12.4" fill="#000000"/>
<path d="M1910.4 1093 H1922.5 M1917.3 1086.4 L1923.8 1093 L1917.3 1099.6" fill="none" stroke="#f6f6f6" stroke-width="2.7" stroke-linecap="round" stroke-linejoin="round"/>
<rect x="1005" y="1114.6" width="953.00" height="1.40" fill="#d2d2d2"/>
<text x="1013.36" y="1142.50" font-size="15.99" fill="#626262" textLength="87.52" lengthAdjust="spacingAndGlyphs">INC0003066</text>
<circle cx="1184.2" cy="1139" r="5.9" fill="#f23b40"/>
<text x="1241.65" y="1142.50" font-size="15.99" fill="#626262" textLength="138.87" lengthAdjust="spacingAndGlyphs">This is a description</text>
<text x="1452.30" y="1142.50" font-size="15.99" fill="#626262" textLength="148.11" lengthAdjust="spacingAndGlyphs">8/6/2017 7:53:58 AM</text>
<text x="1657.72" y="1142.50" font-size="15.99" fill="#626262" textLength="111.08" lengthAdjust="spacingAndGlyphs">Michael Chirkov</text>
<circle cx="1917.5" cy="1136" r="12.4" fill="#000000"/>
<path d="M1910.4 1136 H1922.5 M1917.3 1129.4 L1923.8 1136 L1917.3 1142.6" fill="none" stroke="#f6f6f6" stroke-width="2.7" stroke-linecap="round" stroke-linejoin="round"/>
<rect x="1005" y="1157.6" width="953.00" height="1.40" fill="#d2d2d2"/>
<text x="1013.36" y="1185.50" font-size="15.99" fill="#626262" textLength="87.62" lengthAdjust="spacingAndGlyphs">INC0003287</text>
<circle cx="1184.2" cy="1182" r="5.9" fill="#f23b40"/>
<text x="1241.65" y="1185.50" font-size="15.99" fill="#626262" textLength="138.87" lengthAdjust="spacingAndGlyphs">This is a description</text>
<text x="1452.31" y="1185.50" font-size="15.99" fill="#626262" textLength="156.50" lengthAdjust="spacingAndGlyphs">8/14/2017 4:58:33 PM</text>
<text x="1657.65" y="1185.50" font-size="15.99" fill="#626262" textLength="96.66" lengthAdjust="spacingAndGlyphs">Martin Galkin</text>
<circle cx="1917.5" cy="1179" r="12.4" fill="#000000"/>
<path d="M1910.4 1179 H1922.5 M1917.3 1172.4 L1923.8 1179 L1917.3 1185.6" fill="none" stroke="#f6f6f6" stroke-width="2.7" stroke-linecap="round" stroke-linejoin="round"/>
<rect x="1005" y="1200.6" width="953.00" height="1.40" fill="#d2d2d2"/>
<text x="1013.36" y="1228.50" font-size="15.99" fill="#626262" textLength="87.52" lengthAdjust="spacingAndGlyphs">INC0003406</text>
<circle cx="1184.2" cy="1225" r="5.9" fill="#f23b40"/>
<text x="1241.65" y="1228.50" font-size="15.99" fill="#626262" textLength="138.87" lengthAdjust="spacingAndGlyphs">This is a description</text>
<text x="1452.30" y="1228.50" font-size="15.99" fill="#626262" textLength="157.11" lengthAdjust="spacingAndGlyphs">8/16/2017 2:02:26 AM</text>
<text x="1658.76" y="1228.50" font-size="15.99" fill="#626262" textLength="85.75" lengthAdjust="spacingAndGlyphs">John Polinar</text>
<circle cx="1917.5" cy="1222" r="12.4" fill="#000000"/>
<path d="M1910.4 1222 H1922.5 M1917.3 1215.4 L1923.8 1222 L1917.3 1228.6" fill="none" stroke="#f6f6f6" stroke-width="2.7" stroke-linecap="round" stroke-linejoin="round"/>
<rect x="1878" y="1234.8" width="80.00" height="1.20" fill="#d2d2d2"/>
<rect x="1958.5" y="513" width="20.50" height="213.00" fill="#dcdcdc"/>
<rect x="1005" y="1235.5" width="978.00" height="11.50" fill="#ffffff"/>
</svg></body></html>
